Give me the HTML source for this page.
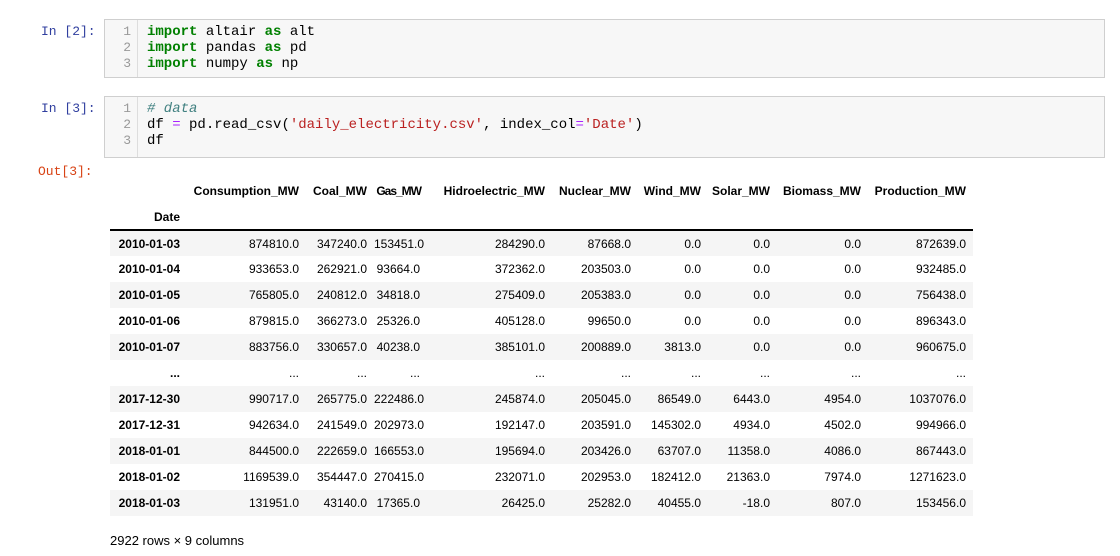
<!DOCTYPE html>
<html><head><meta charset="utf-8"><style>
body{margin:0;background:#fff;width:1120px;height:556px;position:relative;overflow:hidden;font-family:"Liberation Sans",sans-serif}
.p{position:absolute;font-family:"Liberation Mono",monospace;font-size:13px;color:#303f9f}
.cell{position:absolute;left:104px;width:999px;background:#f7f7f7;border:1px solid #cfcfcf;font-family:"Liberation Mono",monospace;font-size:14px;line-height:16px}
.ln{position:absolute;left:0;top:0;bottom:0;width:32px;border-right:1px solid #ddd;color:#999;text-align:right;padding-top:4px;font-size:13px}
.ln div{padding-right:6px}
.code{position:absolute;left:42px;top:4px;color:#000;white-space:pre}
.k{color:#008000;font-weight:bold}.c{color:#408080;font-style:italic}.s{color:#ba2121}.o{color:#aa22ff}
table{position:absolute;left:110px;top:178px;border-collapse:collapse;font-size:12px;color:#000;table-layout:fixed;width:863px}
td,th{height:26px;padding:0 7px 0 0;text-align:right;white-space:nowrap;box-sizing:border-box;overflow:visible}
th{font-weight:bold}
th.g{letter-spacing:-1px;padding-right:6px}
tbody tr:nth-child(odd){background:#f5f5f5}
thead tr.d th{border-bottom:2px solid #000}
</style></head><body>
<div class="p" style="left:41px;top:24px">In [2]:</div>
<div class="cell" style="top:19px;height:57px"><div class="ln"><div>1</div><div>2</div><div>3</div></div>
<div class="code"><span class="k">import</span> altair <span class="k">as</span> alt
<span class="k">import</span> pandas <span class="k">as</span> pd
<span class="k">import</span> numpy <span class="k">as</span> np</div></div>
<div class="p" style="left:41px;top:101px">In [3]:</div>
<div class="cell" style="top:96px;height:60px"><div class="ln"><div>1</div><div>2</div><div>3</div></div>
<div class="code"><span class="c"># data</span>
df <span class="o">=</span> pd.read_csv(<span class="s">'daily_electricity.csv'</span>, index_col<span class="o">=</span><span class="s">'Date'</span>)
df</div></div>
<div class="p" style="left:38px;top:164px;color:#d84315">Out[3]:</div>
<table>
<colgroup><col style="width:77px"><col style="width:119px"><col style="width:68px"><col style="width:53px"><col style="width:125px"><col style="width:86px"><col style="width:70px"><col style="width:69px"><col style="width:91px"><col style="width:105px"></colgroup>
<thead><tr><th></th><th>Consumption_MW</th><th>Coal_MW</th><th class="g">Gas_MW</th><th>Hidroelectric_MW</th><th>Nuclear_MW</th><th>Wind_MW</th><th>Solar_MW</th><th>Biomass_MW</th><th>Production_MW</th></tr>
<tr class="d"><th>Date</th><th></th><th></th><th></th><th></th><th></th><th></th><th></th><th></th><th></th></tr></thead>
<tbody>
<tr><th>2010-01-03</th><td>874810.0</td><td>347240.0</td><td>153451.0</td><td>284290.0</td><td>87668.0</td><td>0.0</td><td>0.0</td><td>0.0</td><td>872639.0</td></tr>
<tr><th>2010-01-04</th><td>933653.0</td><td>262921.0</td><td>93664.0</td><td>372362.0</td><td>203503.0</td><td>0.0</td><td>0.0</td><td>0.0</td><td>932485.0</td></tr>
<tr><th>2010-01-05</th><td>765805.0</td><td>240812.0</td><td>34818.0</td><td>275409.0</td><td>205383.0</td><td>0.0</td><td>0.0</td><td>0.0</td><td>756438.0</td></tr>
<tr><th>2010-01-06</th><td>879815.0</td><td>366273.0</td><td>25326.0</td><td>405128.0</td><td>99650.0</td><td>0.0</td><td>0.0</td><td>0.0</td><td>896343.0</td></tr>
<tr><th>2010-01-07</th><td>883756.0</td><td>330657.0</td><td>40238.0</td><td>385101.0</td><td>200889.0</td><td>3813.0</td><td>0.0</td><td>0.0</td><td>960675.0</td></tr>
<tr><th>...</th><td>...</td><td>...</td><td>...</td><td>...</td><td>...</td><td>...</td><td>...</td><td>...</td><td>...</td></tr>
<tr><th>2017-12-30</th><td>990717.0</td><td>265775.0</td><td>222486.0</td><td>245874.0</td><td>205045.0</td><td>86549.0</td><td>6443.0</td><td>4954.0</td><td>1037076.0</td></tr>
<tr><th>2017-12-31</th><td>942634.0</td><td>241549.0</td><td>202973.0</td><td>192147.0</td><td>203591.0</td><td>145302.0</td><td>4934.0</td><td>4502.0</td><td>994966.0</td></tr>
<tr><th>2018-01-01</th><td>844500.0</td><td>222659.0</td><td>166553.0</td><td>195694.0</td><td>203426.0</td><td>63707.0</td><td>11358.0</td><td>4086.0</td><td>867443.0</td></tr>
<tr><th>2018-01-02</th><td>1169539.0</td><td>354447.0</td><td>270415.0</td><td>232071.0</td><td>202953.0</td><td>182412.0</td><td>21363.0</td><td>7974.0</td><td>1271623.0</td></tr>
<tr><th>2018-01-03</th><td>131951.0</td><td>43140.0</td><td>17365.0</td><td>26425.0</td><td>25282.0</td><td>40455.0</td><td>-18.0</td><td>807.0</td><td>153456.0</td></tr>
</tbody></table>
<div style="position:absolute;left:110px;top:533px;font-size:13px;color:#000">2922 rows × 9 columns</div>
</body></html>
